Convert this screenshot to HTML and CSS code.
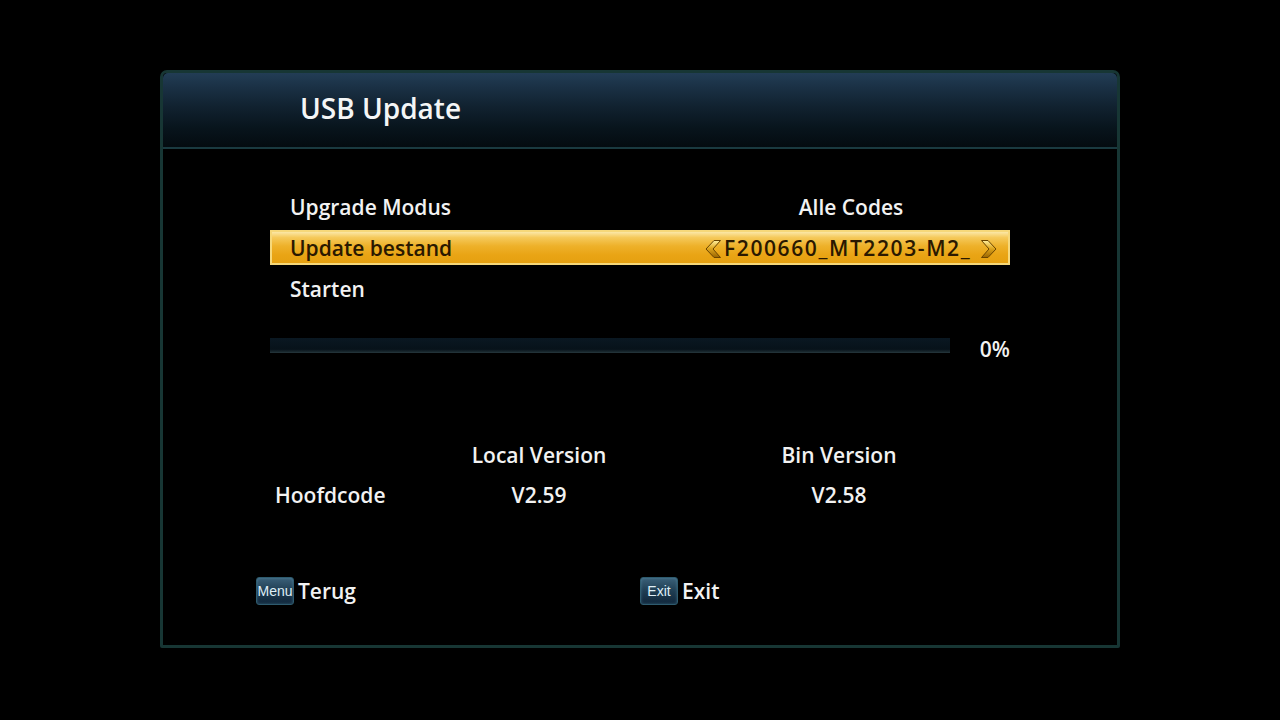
FILE: index.html
```html
<!DOCTYPE html>
<html>
<head>
<meta charset="utf-8">
<link rel="stylesheet" href="styles.css">
</head>
<body>
<div class="panel">
  <div class="header"><h1 class="title">USB Update</h1></div>
  <div class="content">
    <div class="menu">
      <div class="row"><span class="label">Upgrade Modus</span><span class="value">Alle Codes</span></div>
      <div class="row selected"><span class="label">Update bestand</span>
        <span class="value">
          <svg class="arrow" viewBox="0 0 18 20" width="18" height="20"><defs><linearGradient id="ga" x1="0" y1="0" x2="0" y2="1"><stop offset="0" stop-color="#fff0a0"/><stop offset="0.45" stop-color="#e0a820"/><stop offset="1" stop-color="#9a6400"/></linearGradient></defs><path d="M10 1.5 L2 10 L10 18.5 L16.5 18.5 L9 10 L16.5 1.5 Z" fill="url(#ga)" stroke="#6a4400" stroke-width="1" stroke-linejoin="round"/></svg>
          <span class="fname">F200660_MT2203-M2_</span>
          <svg class="arrow" viewBox="0 0 18 20" width="18" height="20"><defs><linearGradient id="gb" x1="0" y1="0" x2="0" y2="1"><stop offset="0" stop-color="#fff0a0"/><stop offset="0.45" stop-color="#e0a820"/><stop offset="1" stop-color="#9a6400"/></linearGradient></defs><path d="M8 1.5 L16 10 L8 18.5 L1.5 18.5 L9 10 L1.5 1.5 Z" fill="url(#gb)" stroke="#6a4400" stroke-width="1" stroke-linejoin="round"/></svg>
        </span>
      </div>
      <div class="row"><span class="label">Starten</span><span class="value"></span></div>
    </div>
    <div class="progress">
      <div class="track"></div>
      <span class="pct">0%</span>
    </div>
    <div class="versions">
      <span></span><span class="vh">Local Version</span><span class="vh">Bin Version</span>
      <span class="vl">Hoofdcode</span><span class="vh">V2.59</span><span class="vh">V2.58</span>
    </div>
    <div class="footer">
      <div class="hint first"><span class="key">Menu</span><span class="ktext">Terug</span></div>
      <div class="hint"><span class="key">Exit</span><span class="ktext">Exit</span></div>
    </div>
  </div>
</div>
</body>
</html>
```
FILE: styles.css
```css
html, body {
  margin: 0;
  padding: 0;
  background: #000;
}
body {
  width: 1280px;
  height: 720px;
  overflow: hidden;
  font-family: "Open Sans", "DejaVu Sans", sans-serif;
  font-weight: 600;
  color: #f2f2f2;
}
.panel {
  box-sizing: border-box;
  margin: 70px 0 0 160px;
  width: 960px;
  height: 578px;
  border: 3px solid #173634;
  border-radius: 7px 7px 2px 2px;
  background: #000;
  display: flex;
  flex-direction: column;
}
.header {
  height: 74px;
  flex: none;
  border-bottom: 2px solid #1a3a40;
  background: linear-gradient(#223d55 0%, #1a3044 20%, #112230 45%, #08141c 75%, #040b10 100%);
  border-radius: 5px 5px 0 0;
  display: flex;
  align-items: center;
  padding-left: 137px;
}
.title {
  margin: 0;
  font-size: 28px;
  font-weight: 600;
  color: #f4f6f6;
  position: relative;
  top: -2px;
}
.content {
  padding: 40px 0 0 107px;
  width: 740px;
}
.menu {
  display: flex;
  flex-direction: column;
  gap: 6px;
}
.row {
  box-sizing: border-box;
  height: 35px;
  display: flex;
  align-items: center;
  justify-content: space-between;
  font-size: 21px;
  line-height: 1;
}
.row > span {
  position: relative;
  top: 1px;
}
.label {
  padding-left: 20px;
}
.value {
  width: 318px;
  display: flex;
  align-items: center;
  justify-content: center;
}
.selected {
  background: linear-gradient(#fbe7a6 0%, #f5c95a 18%, #eeb12a 45%, #e9a414 75%, #e5a010 100%);
  border: 2px solid #f6d87a;
  color: #2a1800;
}
.selected .label { padding-left: 18px; }
.selected .value {
  width: 294px;
  margin-right: 10px;
  justify-content: space-between;
  box-sizing: border-box;
}
.fname { flex: 1; padding-left: 2px; letter-spacing: 1.6px; white-space: nowrap; }
.arrow { flex: none; }
.progress {
  margin-top: 32px;
  height: 15px;
  display: flex;
  align-items: center;
  justify-content: space-between;
}
.track {
  width: 680px;
  height: 15px;
  background: linear-gradient(#0a1822 0%, #07121a 80%, #1b2a30 100%);
  box-sizing: border-box;
  border-bottom: 1px solid #223238;
}
.pct {
  font-size: 21px;
  line-height: 1;
  position: relative;
  top: 4px;
}
.versions {
  margin-top: 82px;
  display: grid;
  grid-template-columns: 169px 200px 100px 200px;
  grid-auto-rows: 40px;
  align-items: center;
  font-size: 21px;
  line-height: 1;
}
.versions span:nth-child(3), .versions span:nth-child(6) { grid-column: 4; }
.vh { text-align: center; }
.vl { padding-left: 5px; }
.footer {
  margin-top: 62px;
  margin-left: -14px;
  display: flex;
}
.hint {
  display: flex;
  align-items: center;
}
.hint.first { width: 384px; }
.key {
  box-sizing: border-box;
  width: 38px;
  height: 28px;
  border: 1px solid #2e5b6e;
  border-radius: 3px;
  background: linear-gradient(#3a6078 0%, #1f3d52 50%, #10263a 100%);
  box-shadow: inset 0 0 3px rgba(120,190,220,0.35);
  color: #dfeef6;
  font-family: "Liberation Sans Narrow", "Liberation Sans", Arial, sans-serif;
  font-weight: 400;
  font-size: 14px;
  display: flex;
  align-items: center;
  justify-content: center;
  margin-right: 4px;
}
.ktext {
  font-size: 21px;
}
```
